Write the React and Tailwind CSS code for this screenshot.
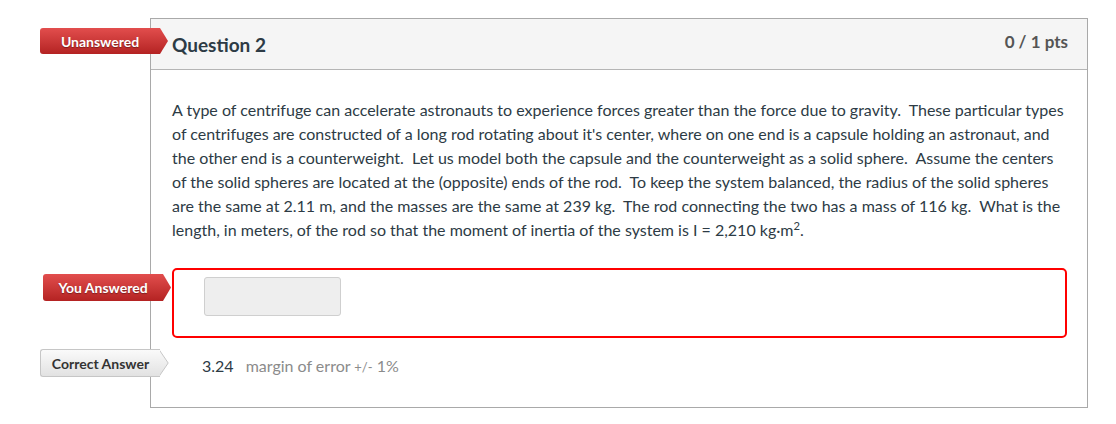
import React from 'react';

const sp = '\u00a0 ';

function Badge({ label, tone = 'red', className = '' }) {
  const isRed = tone === 'red';
  const gradId = isRed ? 'badgeRed' : 'badgeGray';
  return (
    <div className={`absolute flex items-stretch ${className}`}>
      <div
        className={`w-[120px] flex items-center justify-center rounded-l-[3px] text-[14px] font-bold ${
          isRed
            ? 'bg-gradient-to-b from-[#e24d4d] to-[#b42222] text-white [text-shadow:0_1px_1px_rgba(0,0,0,0.35)]'
            : 'bg-gradient-to-b from-[#fafafa] to-[#e2e2e2] text-[#333] border border-r-0 border-[#c6c6c6]'
        }`}
      >
        {label}
      </div>
      <svg width="9" viewBox="0 0 9 28" preserveAspectRatio="none" className="block">
        <defs>
          <linearGradient id={gradId} x1="0" y1="0" x2="0" y2="1">
            <stop offset="0" stopColor={isRed ? '#e24d4d' : '#fafafa'} />
            <stop offset="1" stopColor={isRed ? '#b42222' : '#e2e2e2'} />
          </linearGradient>
        </defs>
        {isRed ? (
          <polygon points="0,0 8,14 0,28" fill={`url(#${gradId})`} />
        ) : (
          <polyline points="-1,0.5 8.2,14 -1,27.5" fill={`url(#${gradId})`} stroke="#c6c6c6" strokeWidth="1" />
        )}
      </svg>
    </div>
  );
}

export default function App() {
  return (
    <div className="w-[1116px] h-[424px] bg-white pt-[18px] pl-[150px] font-['Lato','Liberation_Sans',sans-serif] text-[#2d3b45]">
      <div className="relative w-[938px] border border-[#a9a9a9]">
        {/* Header */}
        <div className="relative h-[51px] bg-[#f5f5f5] border-b border-[#b5b5b5] flex items-center justify-between pl-[21px] pr-[19px]">
          <Badge label="Unanswered" className="left-[-111px] top-[9px] h-[26px]" />
          <h2 className="text-[19px] font-bold mt-[2px]">Question 2</h2>
          <div className="text-[17px] font-bold text-[#555] -mt-[4px]">0 / 1 pts</div>
        </div>

        {/* Body */}
        <div className="pt-[28px] pb-[27px] pl-[21px] pr-[18px]">
          <p className="text-[16px] leading-[24px] text-[#2d3b45]">
            A type of centrifuge can accelerate astronauts to experience forces greater than the force due to gravity.{sp}These particular types of centrifuges are constructed of a long rod rotating about it's center, where on one end is a capsule holding an astronaut, and the other end is a counterweight.{sp}Let us model both the capsule and the counterweight as a solid sphere.{sp}Assume the centers of the solid spheres are located at the (opposite) ends of the rod.{sp}To keep the system balanced, the radius of the solid spheres are the same at 2.11 m, and the masses are the same at 239 kg.{sp}The rod connecting the two has a mass of 116 kg.{sp}What is the length, in meters, of the rod so that the moment of inertia of the system is I = 2,210 kg·m<sup className="text-[0.7em] leading-none align-[0.5em] relative top-0">2</sup>.
          </p>

          {/* You answered */}
          <div className="relative mt-[26px] mr-[2px]">
            <Badge label="You Answered" className="left-[-129px] top-[6px] h-[27px]" />
            <div className="h-[70px] border-2 border-[#ff0000] rounded-[5px] pl-[30px] pt-[7px]">
              <div className="w-[137px] h-[39px] bg-[#eeeeee] border border-[#cfcfcf] rounded-[3px]" />
            </div>
          </div>

          {/* Correct answer */}
          <div className="relative mt-[14px] h-[28px] flex items-center pl-[30px] text-[16px]">
            <Badge label="Correct Answer" tone="gray" className="left-[-132px] top-[-3px] h-[28px]" />
            <span className="text-[#2d3b45]">3.24</span>
            <span className="ml-[12px] text-[#8b8b8b]">
              margin of error <span className="text-[13px]">+/-</span> 1%
            </span>
          </div>
        </div>
      </div>
    </div>
  );
}
